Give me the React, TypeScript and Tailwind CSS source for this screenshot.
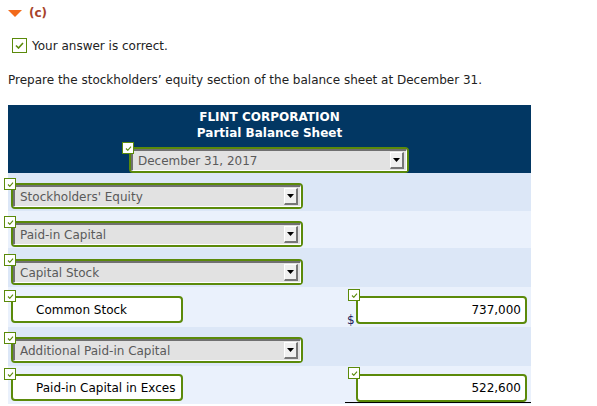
const font = { fontFamily: '"DejaVu Sans", Verdana, sans-serif' };

function Check({ big = false }: { big?: boolean }) {
  return (
    <span
      className={
        big
          ? "flex h-[15px] w-[15px] items-center justify-center border-[1.5px] border-[#5b8a0a] bg-white"
          : "flex h-[12px] w-[12px] items-center justify-center border-[1.5px] border-[#5b8a0a] bg-white"
      }
    >
      <svg width={big ? 9 : 7} height={big ? 7 : 5} viewBox="0 0 9 7" fill="none">
        <path d="M1 3.5 L3.5 6 L8 1" stroke="#5b8a0a" strokeWidth="1.6" />
      </svg>
    </span>
  );
}

function Select({ label, w }: { label: string; w: string }) {
  return (
    <div className={`relative ${w}`}>
      <div className="absolute -left-[7px] -top-[5px] z-10">
        <Check />
      </div>
      <div className="flex h-[26px] rounded-[4px] border-2 border-[#5b8a0a] bg-white">
        <div className="flex flex-1 items-center border-t-2 border-l-2 border-[#707070] border-b border-r border-b-white border-r-white bg-[#e2e2e2] pr-[2px]">
          <span className="flex-1 pl-[5px] text-[12px] leading-none text-[#5a5a5a]">{label}</span>
          <span className="flex h-[17px] w-[14px] items-center justify-center border-t border-l border-white border-r-2 border-b-2 border-r-[#777] border-b-[#777] bg-[#f0f0f0]">
            <svg width="7" height="4" viewBox="0 0 7 4">
              <path d="M0 0 H7 L3.5 4 Z" fill="#000" />
            </svg>
          </span>
        </div>
      </div>
    </div>
  );
}

function TextBox({ label }: { label: string }) {
  return (
    <div className="relative w-[172px]">
      <div className="absolute -left-[7px] -top-[6px] z-10">
        <Check />
      </div>
      <div className="flex h-[27px] items-center rounded-[4px] border-2 border-[#5b8a0a] bg-white pl-[23px] text-[12px] text-black">
        {label}
      </div>
    </div>
  );
}

function Amount({ value, dollar }: { value: string; dollar?: boolean }) {
  return (
    <div className="relative ml-[53px] w-[171px]">
      <div className="absolute -left-[8px] -top-[7px] z-10">
        <Check />
      </div>
      {dollar && (
        <span className="absolute -left-[9px] bottom-[1px] text-[12px] leading-none text-[#1c1c5a]">$</span>
      )}
      <div className="flex h-[28px] items-center justify-end rounded-[4px] border-2 border-[#5b8a0a] bg-white pr-[4px] text-[12px] text-black">
        {value}
      </div>
    </div>
  );
}

export default function App() {
  return (
    <div className="h-[406px] w-[597px] overflow-hidden bg-white text-[12px] text-[#222]" style={font}>
      <div className="flex h-[14px] items-center pl-[8px] mt-[6px]">
        <svg width="14" height="7" viewBox="0 0 14 7">
          <path d="M0 0 H14 L7 7 Z" fill="#f26a1b" />
        </svg>
        <span className="ml-[7px] text-[12px] font-bold leading-none text-[#a8432a]">(c)</span>
      </div>

      <div className="mt-[18px] flex h-[15px] items-center pl-[12px]">
        <Check big />
        <span className="ml-[5px] leading-none">Your answer is correct.</span>
      </div>

      <p className="mt-[19px] pl-[8px] leading-[16px]">
        Prepare the stockholders’ equity section of the balance sheet at December 31.
      </p>

      <div className="ml-[8px] mt-[17px] w-[523px]">
        <div className="h-[68px] bg-[#023763] pt-[4px]">
          <div className="text-center text-[12px] font-bold leading-[16px] text-white">FLINT CORPORATION</div>
          <div className="text-center text-[12px] font-bold leading-[16px] text-white">Partial Balance Sheet</div>
          <div className="ml-[121px] mt-[6px]">
            <Select label="December 31, 2017" w="w-[280px]" />
          </div>
        </div>

        <div className="flex h-[38px] bg-[#dce7f7] pt-[10px] pl-[3px]">
          <Select label="Stockholders' Equity" w="w-[292px]" />
        </div>
        <div className="flex h-[37px] bg-[#eaf1fc] pt-[10px] pl-[3px]">
          <Select label="Paid-in Capital" w="w-[292px]" />
        </div>
        <div className="flex h-[39px] bg-[#dce7f7] pt-[11px] pl-[3px]">
          <Select label="Capital Stock" w="w-[292px]" />
        </div>
        <div className="flex h-[40px] bg-[#eaf1fc] pt-[9px] pl-[3px]">
          <div className="w-[292px]">
            <TextBox label="Common Stock" />
          </div>
          <Amount value="737,000" dollar />
        </div>
        <div className="flex h-[39px] bg-[#dce7f7] pt-[10px] pl-[3px]">
          <Select label="Additional Paid-in Capital" w="w-[292px]" />
        </div>
        <div className="flex h-[38px] bg-[#eaf1fc] pt-[8px] pl-[3px]">
          <div className="w-[292px]">
            <TextBox label="Paid-in Capital in Exces" />
          </div>
          <Amount value="522,600" />
        </div>
        <div className="ml-[337px] h-[1px] w-[186px] -translate-y-[2px] bg-black" />
      </div>
    </div>
  );
}
